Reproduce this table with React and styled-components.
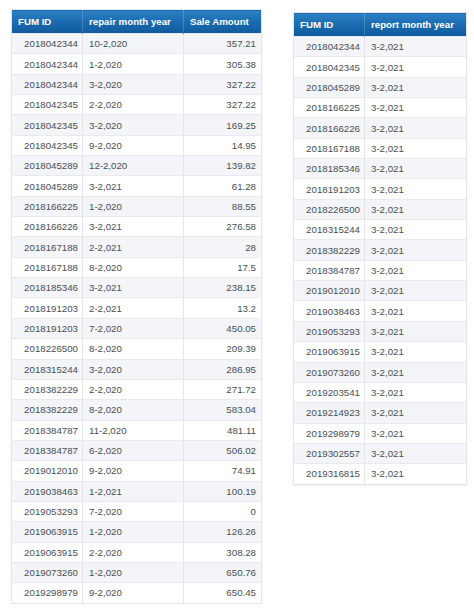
import React from 'react'
import styled, { createGlobalStyle } from 'styled-components'

const GlobalStyle = createGlobalStyle`
  html, body {
    margin: 0;
    padding: 0;
    background: #ffffff;
  }
  body {
    font-family: "Liberation Sans", Arial, Helvetica, sans-serif;
  }
`

const Page = styled.div`
  display: flex;
  align-items: flex-start;
  gap: 31px;
  padding: 9px 0 0 11px;
`

const StyledTable = styled.table`
  border-collapse: collapse;
  table-layout: fixed;
  width: ${(p) => p.width}px;
  margin-top: ${(p) => p.offset || 0}px;
  border: 1px solid #e3e5e8;
  box-shadow: 0 1px 2px rgba(0, 0, 0, 0.06);
  font-size: 9.7px;
  color: #4a4e53;
`

const HeadCell = styled.th`
  height: 24px;
  padding: 0 6px;
  text-align: left;
  font-weight: bold;
  color: #ffffff;
  background: linear-gradient(to bottom, #2c80c4 0%, #1a69ae 55%, #0f5a9c 100%);
  border-left: 1px solid rgba(255, 255, 255, 0.18);
  box-sizing: border-box;
  white-space: nowrap;

  &:first-child {
    border-left: none;
  }
`

const Row = styled.tr`
  background: ${(p) => (p.striped ? '#f3f5f8' : '#ffffff')};
`

const Cell = styled.td`
  height: 20.35px;
  padding: 0 ${(p) => (p.align === 'right' ? '5px' : '6px')} 0 6px;
  text-align: ${(p) => p.align || 'left'};
  border-top: 1px solid #e8eaed;
  border-left: 1px solid #e3e5e8;
  box-sizing: border-box;
  white-space: nowrap;

  &:first-child {
    border-left: none;
    padding-right: 4px;
  }
`

const repairs = [
  ['2018042344', '10-2,020', '357.21'],
  ['2018042344', '1-2,020', '305.38'],
  ['2018042344', '3-2,020', '327.22'],
  ['2018042345', '2-2,020', '327.22'],
  ['2018042345', '3-2,020', '169.25'],
  ['2018042345', '9-2,020', '14.95'],
  ['2018045289', '12-2,020', '139.82'],
  ['2018045289', '3-2,021', '61.28'],
  ['2018166225', '1-2,020', '88.55'],
  ['2018166226', '3-2,021', '276.58'],
  ['2018167188', '2-2,021', '28'],
  ['2018167188', '8-2,020', '17.5'],
  ['2018185346', '3-2,021', '238.15'],
  ['2018191203', '2-2,021', '13.2'],
  ['2018191203', '7-2,020', '450.05'],
  ['2018226500', '8-2,020', '209.39'],
  ['2018315244', '3-2,020', '286.95'],
  ['2018382229', '2-2,020', '271.72'],
  ['2018382229', '8-2,020', '583.04'],
  ['2018384787', '11-2,020', '481.11'],
  ['2018384787', '6-2,020', '506.02'],
  ['2019012010', '9-2,020', '74.91'],
  ['2019038463', '1-2,021', '100.19'],
  ['2019053293', '7-2,020', '0'],
  ['2019063915', '1-2,020', '126.26'],
  ['2019063915', '2-2,020', '308.28'],
  ['2019073260', '1-2,020', '650.76'],
  ['2019298979', '9-2,020', '650.45'],
]

const reports = [
  '2018042344',
  '2018042345',
  '2018045289',
  '2018166225',
  '2018166226',
  '2018167188',
  '2018185346',
  '2018191203',
  '2018226500',
  '2018315244',
  '2018382229',
  '2018384787',
  '2019012010',
  '2019038463',
  '2019053293',
  '2019063915',
  '2019073260',
  '2019203541',
  '2019214923',
  '2019298979',
  '2019302557',
  '2019316815',
].map((id) => [id, '3-2,021'])

// columns: label, width, alignment of the body cells
const repairColumns = [
  { label: 'FUM ID', width: 71, align: 'right' },
  { label: 'repair month year', width: 101 },
  { label: 'Sale Amount', width: 78, align: 'right' },
]

const reportColumns = [
  { label: 'FUM ID', width: 71, align: 'right' },
  { label: 'report month year', width: 102 },
]

const DataTable = ({ columns, rows, offset }) => {
  const width = columns.reduce((sum, c) => sum + c.width, 0)

  return (
    <StyledTable width={width} offset={offset}>
      <colgroup>
        {columns.map((c) => (
          <col key={c.label} style={{ width: c.width }} />
        ))}
      </colgroup>
      <thead>
        <tr>
          {columns.map((c) => (
            <HeadCell key={c.label}>{c.label}</HeadCell>
          ))}
        </tr>
      </thead>
      <tbody>
        {rows.map((row, i) => (
          <Row key={i} striped={i % 2 === 0}>
            {row.map((value, j) => (
              <Cell key={j} align={columns[j].align}>
                {value}
              </Cell>
            ))}
          </Row>
        ))}
      </tbody>
    </StyledTable>
  )
}

const App = () => (
  <>
    <GlobalStyle />
    <Page>
      <DataTable columns={repairColumns} rows={repairs} />
      <DataTable columns={reportColumns} rows={reports} offset={3} />
    </Page>
  </>
)

export default App
